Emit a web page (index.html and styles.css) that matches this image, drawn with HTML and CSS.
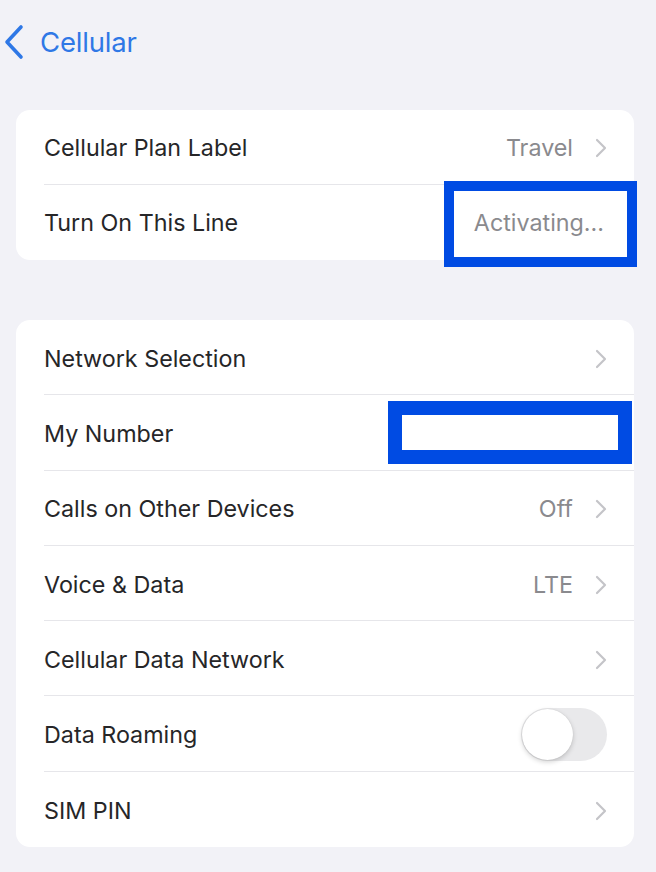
FILE: index.html
```html
<!DOCTYPE html>
<html>
<head>
<meta charset="utf-8">
<link rel="stylesheet" href="styles.css">
</head>
<body>
<div class="page">
  <div class="nav">
    <svg class="back-chev" width="24" height="36" viewBox="0 0 24 36"><path d="M19 3 L5 18 L19 33" fill="none" stroke="#2f78e6" stroke-width="3.6" stroke-linecap="round" stroke-linejoin="round"/></svg>
    <span class="back-label">Cellular</span>
  </div>

  <div class="card card-first">
    <div class="row">
      <span class="label">Cellular Plan Label</span>
      <span class="value">Travel</span>
      <svg class="chev" width="12" height="20" viewBox="0 0 12 20"><path d="M2 2 L10 10 L2 18" fill="none" stroke="#c4c4c8" stroke-width="2.2" stroke-linecap="round" stroke-linejoin="round"/></svg>
    </div>
    <div class="row">
      <span class="label">Turn On This Line</span>
      <span class="value value-nochev">Activating...</span>
    </div>
  </div>

  <div class="card card-second">
    <div class="row">
      <span class="label">Network Selection</span>
      <svg class="chev" width="12" height="20" viewBox="0 0 12 20"><path d="M2 2 L10 10 L2 18" fill="none" stroke="#c4c4c8" stroke-width="2.2" stroke-linecap="round" stroke-linejoin="round"/></svg>
    </div>
    <div class="row">
      <span class="label">My Number</span>
    </div>
    <div class="row">
      <span class="label">Calls on Other Devices</span>
      <span class="value">Off</span>
      <svg class="chev" width="12" height="20" viewBox="0 0 12 20"><path d="M2 2 L10 10 L2 18" fill="none" stroke="#c4c4c8" stroke-width="2.2" stroke-linecap="round" stroke-linejoin="round"/></svg>
    </div>
    <div class="row">
      <span class="label">Voice &amp; Data</span>
      <span class="value">LTE</span>
      <svg class="chev" width="12" height="20" viewBox="0 0 12 20"><path d="M2 2 L10 10 L2 18" fill="none" stroke="#c4c4c8" stroke-width="2.2" stroke-linecap="round" stroke-linejoin="round"/></svg>
    </div>
    <div class="row">
      <span class="label">Cellular Data Network</span>
      <svg class="chev" width="12" height="20" viewBox="0 0 12 20"><path d="M2 2 L10 10 L2 18" fill="none" stroke="#c4c4c8" stroke-width="2.2" stroke-linecap="round" stroke-linejoin="round"/></svg>
    </div>
    <div class="row">
      <span class="label">Data Roaming</span>
      <span class="toggle"><span class="knob"></span></span>
    </div>
    <div class="row">
      <span class="label">SIM PIN</span>
      <svg class="chev" width="12" height="20" viewBox="0 0 12 20"><path d="M2 2 L10 10 L2 18" fill="none" stroke="#c4c4c8" stroke-width="2.2" stroke-linecap="round" stroke-linejoin="round"/></svg>
    </div>
  </div>

  <div class="mark mark-one"></div>
  <div class="mark mark-two"></div>
</div>
</body>
</html>
```

FILE: styles.css
```css
html, body {
  margin: 0;
  padding: 0;
  background: #f2f2f7;
}

.page {
  position: relative;
  width: 656px;
  height: 872px;
  overflow: hidden;
  font-family: Inter, "Noto Sans", sans-serif;
  color: #262628;
}

.nav {
  height: 84px;
  display: flex;
  align-items: center;
  padding-left: 2px;
  gap: 14px;
}

.back-chev {
  display: block;
}

.back-label {
  font-size: 27.5px;
  color: #2f78e6;
  letter-spacing: -0.2px;
}

.card {
  background: #ffffff;
  border-radius: 14px;
  margin: 0 22px 0 16px;
  overflow: hidden;
}

.card-first {
  margin-top: 26px;
}

.card-second {
  margin-top: 60px;
}

.row {
  height: 75.3px;
  display: flex;
  align-items: center;
  margin-left: 28px;
  padding-right: 27px;
  padding-top: 2px;
  border-bottom: 1px solid #e6e6ea;
  box-sizing: border-box;
}

.row:last-child {
  border-bottom: none;
}

.card-first .row {
  height: 75px;
  padding-top: 0;
}

.label {
  flex: 1;
  font-size: 23.3px;
}

.value {
  font-size: 23.3px;
  color: #8a8a8e;
  margin-right: 22px;
}

.value-nochev {
  margin-right: 3px;
}

.chev {
  display: block;
  margin-top: 1px;
}

.toggle {
  width: 86px;
  height: 53px;
  border-radius: 27px;
  background: #e9e9eb;
  position: relative;
}

.knob {
  position: absolute;
  left: 1px;
  top: 1px;
  width: 51px;
  height: 51px;
  border-radius: 50%;
  background: #ffffff;
  box-shadow: 0 2px 5px rgba(0, 0, 0, 0.18), 0 0 1px rgba(0, 0, 0, 0.15);
}

.mark {
  position: absolute;
  border-style: solid;
  border-color: #004be3;
  box-sizing: border-box;
}

.mark-one {
  left: 444px;
  top: 181px;
  width: 193px;
  height: 86px;
  border-width: 10px;
}

.mark-two {
  left: 388px;
  top: 401px;
  width: 244px;
  height: 63px;
  border-width: 14px;
}
```
